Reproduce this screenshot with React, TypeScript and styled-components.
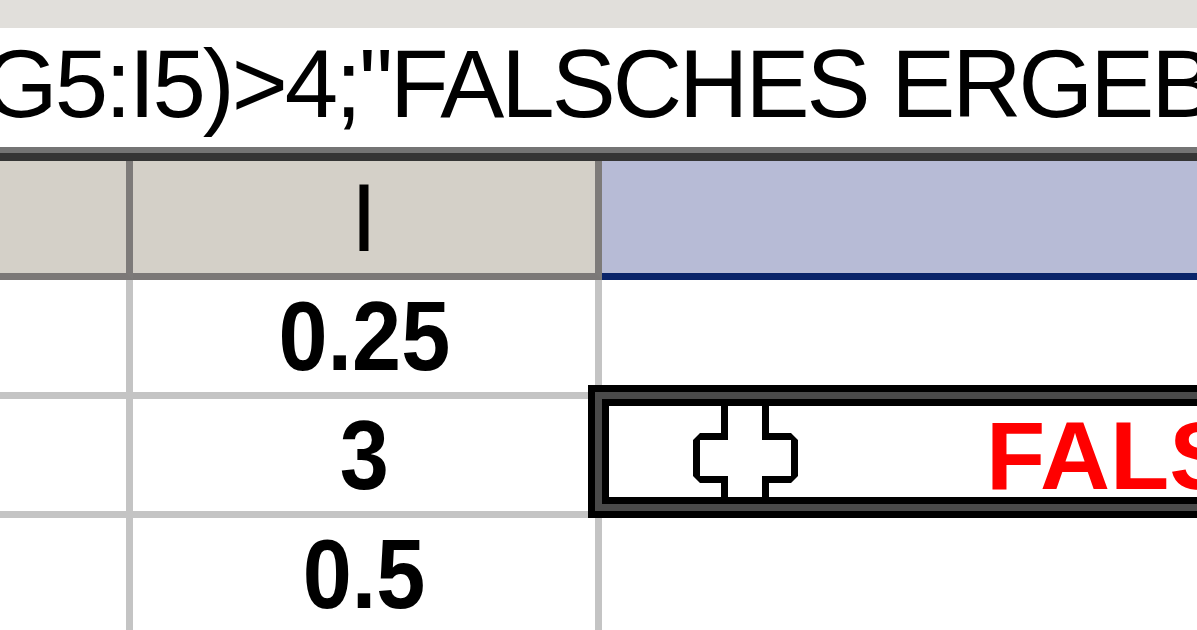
import React from "react";
import styled, { createGlobalStyle } from "styled-components";

const GlobalStyle = createGlobalStyle`
  html, body {
    margin: 0;
    padding: 0;
    background: #ffffff;
  }
  body {
    width: 1197px;
    height: 630px;
    overflow: hidden;
    font-family: "Liberation Sans", Arial, sans-serif;
  }
`;

const Window = styled.div`
  width: 1197px;
  height: 630px;
  overflow: hidden;
  display: flex;
  flex-direction: column;
  background: #ffffff;
`;

const ToolbarEdge = styled.div`
  flex: none;
  height: 28px;
  background: #e1dfdb;
`;

const FormulaBar = styled.div`
  flex: none;
  height: 125px;
  box-sizing: border-box;
  padding-top: 8px;
  background: #ffffff;
  border-bottom: 6px solid #747474;
  overflow: hidden;
  white-space: nowrap;
`;

const FormulaText = styled.div`
  margin-left: -17px;
  font-size: 96px;
  line-height: 1;
  letter-spacing: -3px;
  color: #000000;
`;

const Sheet = styled.div`
  flex: 1;
  display: grid;
  grid-template-columns: 133px 469px minmax(0, 1fr);
  grid-auto-rows: 119px;
  border-top: 8px solid #353535;
  overflow: hidden;
`;

const ColumnHeader = styled.div<{ $selected?: boolean; $last?: boolean }>`
  box-sizing: border-box;
  display: flex;
  align-items: center;
  justify-content: center;
  background: ${(p) => (p.$selected ? "#b7bbd6" : "#d4d0c8")};
  border-bottom: 7px solid ${(p) => (p.$selected ? "#0a246a" : "#7b7877")};
  border-right: ${(p) => (p.$last ? "none" : "7px solid #7d7a79")};
  font-size: 97px;
  line-height: 1;
  color: #000000;
`;

const Cell = styled.div<{ $last?: boolean }>`
  position: relative;
  box-sizing: border-box;
  display: flex;
  align-items: center;
  justify-content: center;
  background: #ffffff;
  border-bottom: 7px solid #c4c4c4;
  border-right: ${(p) => (p.$last ? "none" : "7px solid #c4c4c4")};
  font-size: 98px;
  font-weight: bold;
  line-height: 1;
  color: #000000;
  white-space: nowrap;
`;

/* narrow bold figures, like the sheet's bitmap font */
const CellNumber = styled.span`
  display: inline-block;
  transform: scaleX(0.9);
`;

const ActiveCell = styled(Cell)`
  justify-content: flex-start;
  padding-left: 384px;
  font-size: 97px;
  color: #ff0000;
`;

/* Excel's thick three-line frame around the active cell */
const SelectionFrame = styled.span`
  position: absolute;
  top: -7px;
  left: -7px;
  bottom: 0;
  right: -40px;
  border: 7px solid #4a4a4a;
  box-shadow: 0 0 0 7px #000000, inset 0 0 0 7px #000000;
  z-index: 2;
  pointer-events: none;
`;

const CursorIcon = styled.svg`
  position: absolute;
  left: 91px;
  top: -8px;
  z-index: 1;
`;

function FatCrossCursor() {
  return (
    <CursorIcon width="106" height="114" viewBox="0 0 106 114">
      <path
        d="M28 0 H76 V42 H98 L105 49 V85 L98 92 H76 V114 H28 V92 H7 L0 85 V49 L7 42 H28 Z"
        fill="#000000"
      />
      <path
        d="M35 0 H69 V49 H98 V85 H69 V107 H35 V85 H7 V49 H35 Z"
        fill="#ffffff"
      />
    </CursorIcon>
  );
}

const values = ["0.25", "3", "0.5"];

export default function App() {
  return (
    <>
      <GlobalStyle />
      <Window>
        <ToolbarEdge />
        <FormulaBar>
          <FormulaText>G5:I5)&gt;4;"FALSCHES ERGEBNIS"</FormulaText>
        </FormulaBar>
        <Sheet>
          <ColumnHeader />
          <ColumnHeader>I</ColumnHeader>
          <ColumnHeader $selected $last />

          {values.map((v, i) => (
            <React.Fragment key={i}>
              <Cell />
              <Cell>
                <CellNumber>{v}</CellNumber>
              </Cell>
              {i === 1 ? (
                <ActiveCell $last>
                  FALSCHES ERGEBNIS
                  <FatCrossCursor />
                  <SelectionFrame />
                </ActiveCell>
              ) : (
                <Cell $last />
              )}
            </React.Fragment>
          ))}
        </Sheet>
      </Window>
    </>
  );
}
